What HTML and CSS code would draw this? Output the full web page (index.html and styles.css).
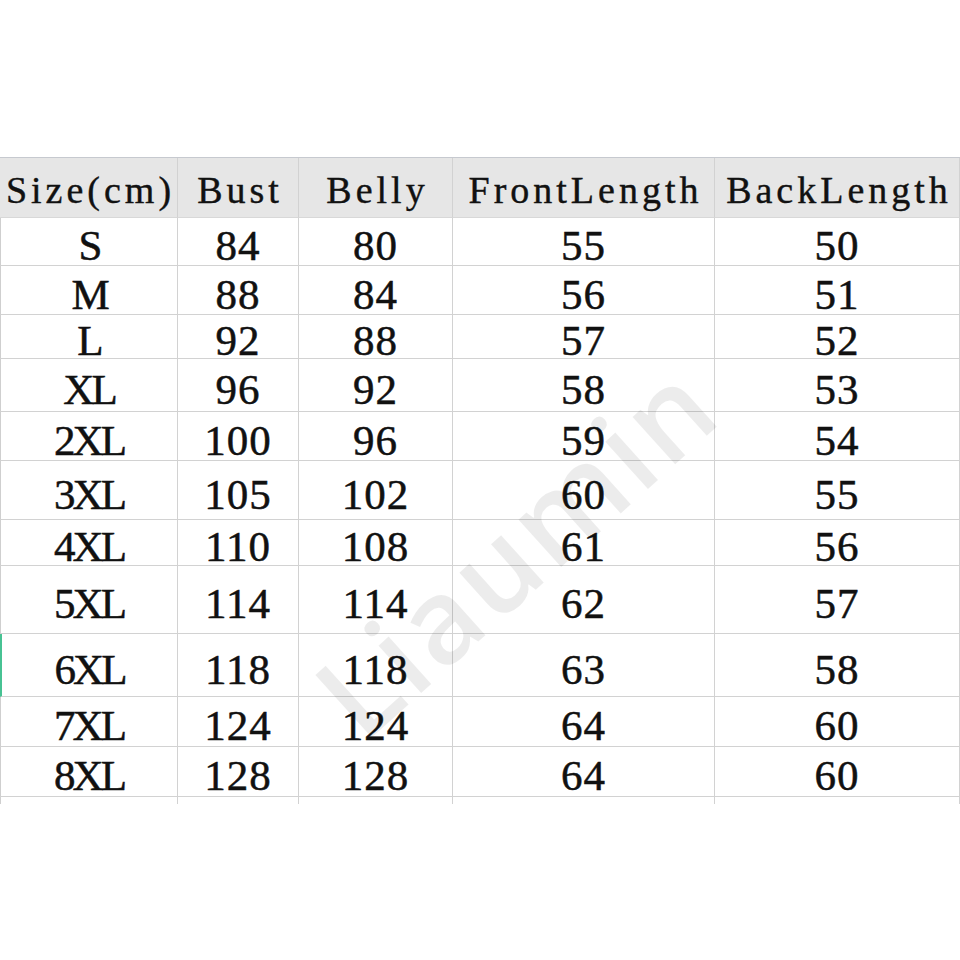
FILE: index.html
```html
<!DOCTYPE html>
<html lang="en">
<head>
<meta charset="utf-8">
<title>Size chart</title>
<link rel="stylesheet" href="styles.css">
</head>
<body>
<div class="page">
  <div class="sheet">
    <div class="cell head">Size(cm)</div>
    <div class="cell head">Bust</div>
    <div class="cell head">Belly</div>
    <div class="cell head">FrontLength</div>
    <div class="cell head">BackLength</div>

    <div class="cell size">S</div><div class="cell">84</div><div class="cell">80</div><div class="cell">55</div><div class="cell">50</div>
    <div class="cell size">M</div><div class="cell">88</div><div class="cell">84</div><div class="cell">56</div><div class="cell">51</div>
    <div class="cell size">L</div><div class="cell">92</div><div class="cell">88</div><div class="cell">57</div><div class="cell">52</div>
    <div class="cell size">XL</div><div class="cell">96</div><div class="cell">92</div><div class="cell">58</div><div class="cell">53</div>
    <div class="cell size">2XL</div><div class="cell">100</div><div class="cell">96</div><div class="cell">59</div><div class="cell">54</div>
    <div class="cell size">3XL</div><div class="cell">105</div><div class="cell">102</div><div class="cell">60</div><div class="cell">55</div>
    <div class="cell size">4XL</div><div class="cell">110</div><div class="cell">108</div><div class="cell">61</div><div class="cell">56</div>
    <div class="cell size">5XL</div><div class="cell">114</div><div class="cell">114</div><div class="cell">62</div><div class="cell">57</div>
    <div class="cell size mark">6XL</div><div class="cell">118</div><div class="cell">118</div><div class="cell">63</div><div class="cell">58</div>
    <div class="cell size">7XL</div><div class="cell">124</div><div class="cell">124</div><div class="cell">64</div><div class="cell">60</div>
    <div class="cell size">8XL</div><div class="cell">128</div><div class="cell">128</div><div class="cell">64</div><div class="cell">60</div>

    <div class="cell stub size"></div><div class="cell stub"></div><div class="cell stub"></div><div class="cell stub"></div><div class="cell stub"></div>
  </div>
  <div class="watermark">Liaumin</div>
</div>
</body>
</html>
```

FILE: styles.css
```css
html, body {
  margin: 0;
  padding: 0;
  background: #ffffff;
}

.page {
  position: relative;
  width: 960px;
  height: 960px;
  overflow: hidden;
  padding-top: 157px;
  box-sizing: border-box;
}

.sheet {
  display: grid;
  grid-template-columns: 178px 121px 154px 262px 245px;
  grid-template-rows: 60px 48px 49px 44px 53px 49px 59px 46px 68px 63px 50px 50px 7px;
  border-top: 1px solid #c6c9cf;
  font-family: "Liberation Serif", "Noto Serif", serif;
  color: #111111;
}

.cell {
  box-sizing: border-box;
  display: flex;
  align-items: center;
  justify-content: center;
  border-right: 1px solid #d2d2d2;
  border-bottom: 1px solid #d2d2d2;
  font-size: 43px;
  letter-spacing: 1px;
  padding-top: 8px;
  white-space: nowrap;
  -webkit-text-stroke: 0.5px #111111;
}

.head {
  background: #e6e6e6;
  font-size: 38px;
  letter-spacing: 4px;
  padding-top: 4px;
  padding-left: 4px;
  border-bottom-color: #d8d8d8;
  -webkit-text-stroke: 0.4px #111111;
}

.size {
  border-left: 1px solid #cfcfcf;
  letter-spacing: -3px;
  padding-right: 0;
}

.head.size {
  letter-spacing: 4px;
}

.mark {
  border-left: 2px solid #47c293;
}

.stub {
  border-bottom: none;
  padding: 0;
}

.watermark {
  position: absolute;
  left: 515px;
  top: 548px;
  transform: translate(-50%, -50%) rotate(-42deg);
  font-family: "Open Sans", "Liberation Sans", sans-serif;
  font-weight: 600;
  font-size: 118px;
  letter-spacing: 4px;
  color: rgba(0, 0, 0, 0.075);
  pointer-events: none;
  white-space: nowrap;
  line-height: 1;
}
```
